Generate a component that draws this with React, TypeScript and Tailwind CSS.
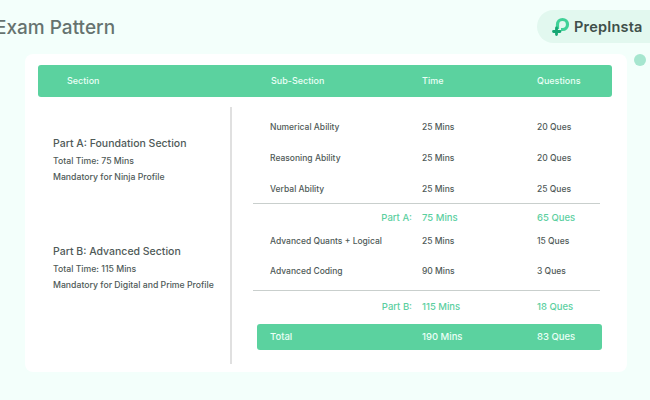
const font = "[font-family:Inter,'Noto_Sans',sans-serif]";

const subRowsA = [
	{ name: "Numerical Ability", time: "25 Mins", ques: "20 Ques" },
	{ name: "Reasoning Ability", time: "25 Mins", ques: "20 Ques" },
	{ name: "Verbal Ability", time: "25 Mins", ques: "25 Ques" },
];

const subRowsB = [
	{ name: "Advanced Quants + Logical", time: "25 Mins", ques: "15 Ques" },
	{ name: "Advanced Coding", time: "90 Mins", ques: "3 Ques" },
];

function Row({ name, time, ques, h }: { name: string; time: string; ques: string; h: string }) {
	return (
		<div className={`grid grid-cols-[152px_115px_1fr] items-center pl-[17px] text-[8.5px] font-medium text-[#4f5a58] ${h}`}>
			<span>{name}</span>
			<span>{time}</span>
			<span>{ques}</span>
		</div>
	);
}

function Subtotal({ label, time, ques, className }: { label: string; time: string; ques: string; className: string }) {
	return (
		<div className={`grid grid-cols-[152px_115px_1fr] items-center pl-[17px] text-[9.5px] font-medium text-[#5ccf9f] ${className}`}>
			<span className="pr-[10px] text-right">{label}</span>
			<span>{time}</span>
			<span>{ques}</span>
		</div>
	);
}

function SectionInfo({ title, time, note }: { title: string; time: string; note: string }) {
	return (
		<div className="text-[#4f5a58]">
			<h2 className="text-[10.5px] leading-[14px] font-medium">{title}</h2>
			<p className="mt-[3px] text-[8.7px] leading-[14px] font-medium">{time}</p>
			<p className="mt-[2px] text-[8.7px] leading-[14px] font-medium">{note}</p>
		</div>
	);
}

export default function App() {
	return (
		<div className={`relative h-[400px] w-[650px] overflow-hidden bg-[#f3fffb] ${font}`}>
			<header className="flex h-[54px] items-start justify-between">
				<h1 className="ml-[-5px] mt-[16px] text-[19px] leading-[24px] font-medium whitespace-nowrap text-[#66736f]">
					Exam Pattern
				</h1>
				<div className="mt-[10px] mr-[-20px] flex h-[33px] w-[133px] items-center gap-[4px] rounded-full bg-[#e2f8ef] pl-[15px]">
					<svg width="18" height="20" viewBox="0 0 18 20" fill="none">
						<path d="M5.5 12 V7.5 A5 5 0 1 1 10.5 12.5 H9" stroke="#3fd197" strokeWidth="3.2" />
						<path d="M4.5 11 V17.5 M1.5 14.5 H8" stroke="#16a673" strokeWidth="2.8" strokeLinecap="round" />
					</svg>
					<span className="text-[14.5px] font-semibold tracking-[0.2px] text-[#3f4f4a]">PrepInsta</span>
				</div>
			</header>

			<div className="absolute left-[634px] top-[54px] size-[12px] rounded-full bg-[#a6e6cf]" />

			<main className="mx-[25px] h-[318px] w-[602px] rounded-[8px] bg-white pl-[13px] pt-[11px]">
				<div className="grid h-[32px] w-[574px] grid-cols-[204px_151px_115px_1fr] items-center rounded-[3px] bg-[#5bd29f] pl-[29px] text-[9px] font-medium text-[#eafff6]">
					<span>Section</span>
					<span>Sub-Section</span>
					<span>Time</span>
					<span>Questions</span>
				</div>

				<div className="mt-[10px] flex h-[257px]">
					<div className="flex w-[194px] flex-col border-r-[2px] border-[#e0e0e0] pl-[15px]">
						<div className="mt-[30px]">
							<SectionInfo
								title="Part A: Foundation Section"
								time="Total Time: 75 Mins"
								note="Mandatory for Ninja Profile"
							/>
						</div>
						<div className="mt-[61px]">
							<SectionInfo
								title="Part B: Advanced Section"
								time="Total Time: 115 Mins"
								note="Mandatory for Digital and Prime Profile"
							/>
						</div>
					</div>

					<div className="w-[368px] pl-[21px]">
						<div className="pt-[5px]">
							{subRowsA.map((r) => (
								<Row key={r.name} {...r} h="h-[31px]" />
							))}
						</div>
						<div className="mt-[-2px] h-px w-[347px] bg-[#c9cfcd]" />
						<Subtotal label="Part A:" time="75 Mins" ques="65 Ques" className="mt-[6px] h-[16px]" />
						{subRowsB.map((r) => (
							<Row key={r.name} {...r} h="h-[30px]" />
						))}
						<div className="mt-[4px] h-px w-[347px] bg-[#c9cfcd]" />
						<Subtotal label="Part B:" time="115 Mins" ques="18 Ques" className="h-[33px]" />
						<div className="ml-[4px] grid h-[26px] w-[345px] grid-cols-[152px_115px_1fr] items-center rounded-[3px] bg-[#5bd29f] pl-[13px] text-[9.5px] font-medium text-[#eafff6]">
							<span>Total</span>
							<span>190 Mins</span>
							<span>83 Ques</span>
						</div>
					</div>
				</div>
			</main>
		</div>
	);
}
